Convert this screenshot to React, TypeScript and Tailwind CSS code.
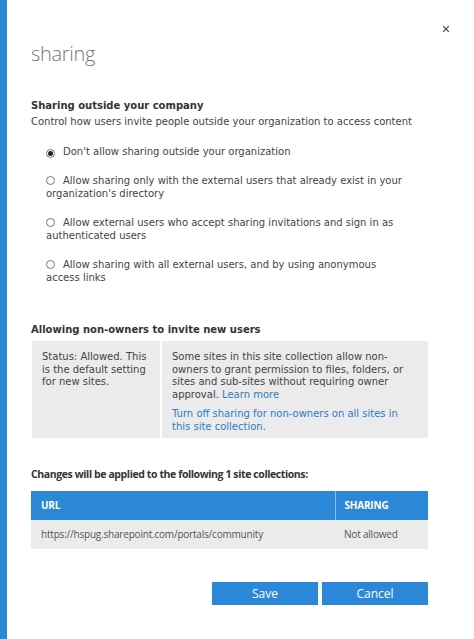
import { X } from "lucide-react"

const verdana = "font-['DejaVu_Sans',Verdana,sans-serif]"
const segoe = "font-['Open_Sans','Noto_Sans',sans-serif]"

const options = [
  "Don't allow sharing outside your organization",
  "Allow sharing only with the external users that already exist in your organization's directory",
  "Allow external users who accept sharing invitations and sign in as authenticated users",
  "Allow sharing with all external users, and by using anonymous access links",
]

function Radio({ checked }: { checked: boolean }) {
  return (
    <span className="relative top-[1px] mr-[8px] inline-flex h-[9px] w-[9px] items-center justify-center rounded-full border border-[#777] bg-white align-baseline">
      {checked && <span className="h-[5px] w-[5px] rounded-full bg-[#222]" />}
    </span>
  )
}

export default function App() {
  return (
    <div className="flex h-[639px] w-[474px] bg-white text-[#444]">
      {/* left accent */}
      <div className="w-[7px] bg-[#2b88d8]" />

      <div className="relative flex-1 pl-[24px] pr-[46px]">
        <button className="absolute right-[23px] top-[24px] text-[#555]">
          <X className="h-[10px] w-[10px]" strokeWidth={2.75} />
        </button>

        <h1 className={`${segoe} mt-[41px] text-[20px] font-light leading-[26px] tracking-[-0.3px] text-[#777]`}>
          sharing
        </h1>

        <div className={`${verdana} mt-[31px] text-[10px]`}>
          <div className="font-bold leading-[16px] text-[#333]">Sharing outside your company</div>
          <div className="leading-[16px]">Control how users invite people outside your organization to access content</div>

          <div className="mt-[15px] space-y-[16px] pl-[15px] pr-[20px]">
            {options.map((label, i) => (
              <div key={i} className="leading-[13px]">
                <Radio checked={i === 0} />
                {label}
              </div>
            ))}
          </div>

          <div className="mt-[38px] font-bold leading-[16px] text-[#333]">Allowing non-owners to invite new users</div>
          <div className="ml-[1px] mt-[3px] flex h-[97px] gap-[2px] leading-[12.5px]">
            <div className="w-[128px] bg-[#ebebeb] px-[10px] pt-[10px]">
              Status: Allowed. This is the default setting for new sites.
            </div>
            <div className="flex-1 bg-[#ebebeb] pl-[10px] pr-[14px] pt-[10px]">
              <p>
                Some sites in this site collection allow non-owners to grant permission to files, folders, or sites and
                sub-sites without requiring owner approval. <a className="text-[#2b7cc0]">Learn more</a>
              </p>
              <p className="mt-[7px] text-[#2b7cc0]">Turn off sharing for non-owners on all sites in this site collection.</p>
            </div>
          </div>
        </div>

        <div className={`${segoe} mt-[28px] text-[10.5px] font-bold leading-[16px] tracking-[-0.4px] text-[#333]`}>
          Changes will be applied to the following 1 site collections:
        </div>

        <table className={`${segoe} mt-[9px] w-full border-collapse text-[10px] tracking-[-0.2px]`}>
          <thead>
            <tr className="h-[29px] bg-[#2b88d8] text-left text-[10px] font-semibold text-white">
              <th className="w-[304px] border-r border-[#8fc0ea] pl-[10px]">URL</th>
              <th className="pl-[9px]">SHARING</th>
            </tr>
          </thead>
          <tbody>
            <tr className="h-[29px] bg-[#ebebeb] text-[#555]">
              <td className="pl-[10px]">https://hspug.sharepoint.com/portals/community</td>
              <td className="pl-[9px]">Not allowed</td>
            </tr>
          </tbody>
        </table>

        <div className={`${segoe} mt-[33px] flex justify-end gap-[4px] text-[12px] text-white`}>
          <button className="h-[23px] w-[106px] bg-[#2b88d8]">Save</button>
          <button className="h-[23px] w-[106px] bg-[#2b88d8]">Cancel</button>
        </div>
      </div>
    </div>
  )
}
